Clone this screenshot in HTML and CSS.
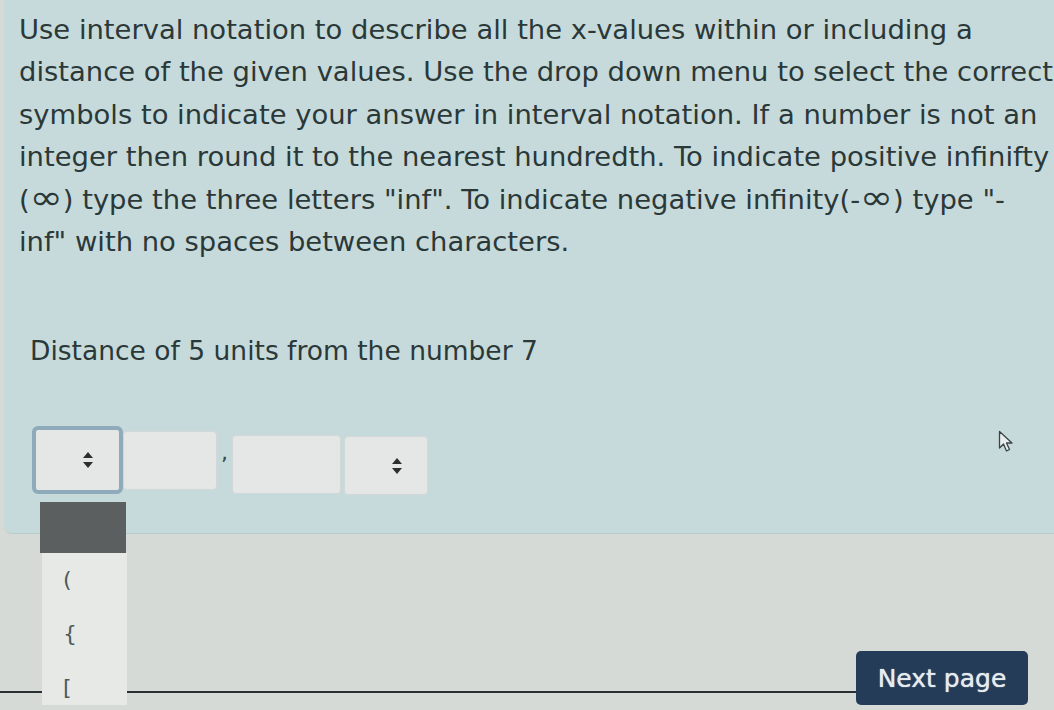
FILE: index.html
```html
<!DOCTYPE html>
<html lang="en">
<head>
<meta charset="utf-8">
<title>Interval notation</title>
<link rel="stylesheet" href="styles.css">
</head>
<body>
<div class="page">
  <section class="panel">
    <p class="instructions">Use interval notation to describe all the x-values within or including a<br>distance of the given values. Use the drop down menu to select the correct<br>symbols to indicate your answer in interval notation. If a number is not an<br>integer then round it to the nearest hundredth. To indicate positive infinifty<br>(<span class="inf">&infin;</span>) type the three letters "inf". To indicate negative infinity(-<span class="inf">&infin;</span>) type "-<br>inf" with no spaces between characters.</p>
    <p class="question">Distance of 5 units from the number 7</p>
    <div class="answer-row">
      <div class="select focused"><span class="arrows"><svg width="12" height="18" viewBox="0 0 12 18"><path d="M6 1 L11 7 H1 Z M6 17 L11 11 H1 Z" fill="#2b2f30"/></svg></span></div>
      <div class="field f1"></div>
      <span class="comma">,</span>
      <div class="field f2"></div>
      <div class="select right"><span class="arrows"><svg width="12" height="18" viewBox="0 0 12 18"><path d="M6 1 L11 7 H1 Z M6 17 L11 11 H1 Z" fill="#2b2f30"/></svg></span></div>
    </div>
  </section>
  <section class="footer">
    <button class="next">Next page</button>
  </section>
  <div class="dropdown">
    <div class="dd-head"></div>
    <ul class="dd-list">
      <li>(</li>
      <li>{</li>
      <li>[</li>
    </ul>
  </div>
  <svg class="cursor" width="18" height="24" viewBox="0 0 18 24"><path d="M1.5 1.5 L1.5 18 L5.5 14 L8.5 21 L11.5 19.5 L8.5 13 L14 13 Z" fill="#e9eeee" stroke="#3a4446" stroke-width="1.3" stroke-linejoin="round"/></svg>
</div>
</body>
</html>
```
FILE: styles.css
```css
html, body {
  margin: 0;
  padding: 0;
}
body {
  width: 1054px;
  height: 710px;
  overflow: hidden;
  background: #d6dad7;
  font-family: "DejaVu Sans", Verdana, sans-serif;
  color: #2b3838;
}
.page {
  position: relative;
  width: 1054px;
  height: 710px;
}
.panel {
  margin-left: 4px;
  height: 534px;
  box-sizing: border-box;
  background: #c6dadb;
  border-bottom-left-radius: 8px;
  border-bottom: 1px solid #b9cccc;
  padding: 9px 0 0 0;
}
.instructions {
  margin: 0;
  padding-left: 15px;
  font-size: 27.4px;
  line-height: 42.4px;
  white-space: nowrap;
}
.inf {
  display: inline-block;
  font-size: 1.45em;
  line-height: 0;
  vertical-align: -0.06em;
  transform: scaleY(0.85);
}
.question {
  margin: 71px 0 0 0;
  padding-left: 26px;
  font-size: 26.5px;
  line-height: 34px;
  white-space: nowrap;
}
.answer-row {
  display: flex;
  align-items: flex-start;
  margin: 58px 0 0 28px;
}
.select, .field {
  box-sizing: border-box;
  background: #e4e7e5;
  border: 1px solid #d2d8d7;
  border-radius: 4px;
  height: 59px;
}
.select {
  width: 86px;
  display: flex;
  align-items: center;
  justify-content: flex-end;
  padding-right: 28px;
}
.select.focused {
  width: 91px;
  height: 68px;
  border: 4px solid #8eaabb;
  border-radius: 6px;
  padding-right: 25px;
}
.select.right {
  margin-top: 10px;
  margin-left: 3px;
  width: 84px;
  padding-right: 24px;
}
.field.f1 {
  width: 94px;
  margin-top: 5px;
}
.field.f2 {
  width: 109px;
  margin-top: 9px;
}
.comma {
  width: 15px;
  text-align: center;
  font-size: 22px;
  margin-top: 14px;
  color: #3b4a4b;
}
.arrows {
  display: flex;
}
.footer {
  height: 176px;
  display: flex;
  align-items: flex-end;
  justify-content: flex-end;
  padding-right: 26px;
  box-sizing: border-box;
  background: linear-gradient(#2a2f33, #2a2f33) 0 157px / 860px 2px no-repeat;
}
.next {
  margin-bottom: 5px;
  width: 172px;
  height: 54px;
  background: #243c58;
  color: #e6ecee;
  border: none;
  border-radius: 5px;
  font-family: "DejaVu Sans", Verdana, sans-serif;
  font-size: 25px;
  font-weight: normal;
  text-shadow: 0 0 1px #e6ecee;
  padding: 0;
}
.dropdown {
  position: absolute;
  left: 40px;
  top: 502px;
  width: 86px;
}
.dd-head {
  height: 51px;
  background: #5b5f5f;
}
.dd-list {
  list-style: none;
  margin: 0 0 0 2px;
  padding: 0;
  height: 152px;
  box-sizing: border-box;
  background: #e7e9e7;
  width: 85px;
}
.dd-list li {
  font-size: 22px;
  line-height: 54px;
  padding-left: 21px;
  color: #4e5a5c;
}
.cursor {
  position: absolute;
  left: 998px;
  top: 430px;
}
```
